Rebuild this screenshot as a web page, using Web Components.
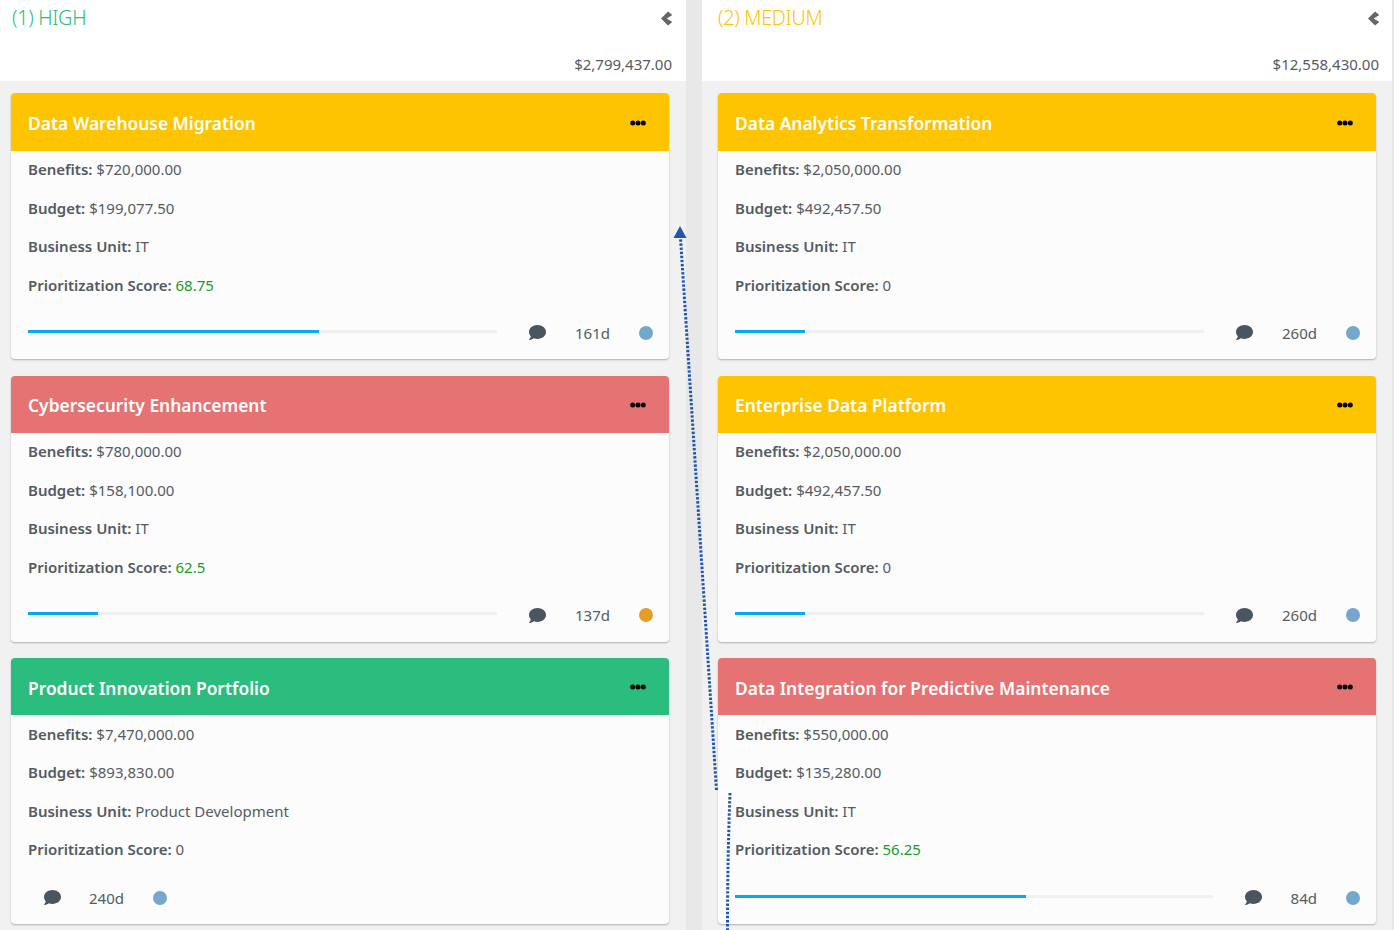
<!DOCTYPE html>
<html lang="en"><head><meta charset="utf-8"><title>Board</title>
<style>
html,body{margin:0;height:100%;overflow:hidden;background:#e8e8e8;font-family:"Noto Sans","Open Sans",sans-serif;color:#495057}
</style></head><body>
<x-board>
<x-column heading="(1) HIGH" total="$2,799,437.00" color="#2bbd7e" style="--pad-l:11px;--pad-r:17px;--w:686px;--hl:12px;--hr:14px">
  <x-card title-text="Data Warehouse Migration" color="#ffc400" bar="291" days="161d" dot="#74a7cb">
    <x-field label="Benefits">$720,000.00</x-field><x-field label="Budget">$199,077.50</x-field><x-field label="Business Unit">IT</x-field><x-field label="Prioritization Score" good>68.75</x-field>
  </x-card>
  <x-card title-text="Cybersecurity Enhancement" color="#e57373" bar="70" days="137d" dot="#e79c26">
    <x-field label="Benefits">$780,000.00</x-field><x-field label="Budget">$158,100.00</x-field><x-field label="Business Unit">IT</x-field><x-field label="Prioritization Score" good>62.5</x-field>
  </x-card>
  <x-card title-text="Product Innovation Portfolio" color="#2bbd7e" days="240d" dot="#74a7cb">
    <x-field label="Benefits">$7,470,000.00</x-field><x-field label="Budget">$893,830.00</x-field><x-field label="Business Unit">Product Development</x-field><x-field label="Prioritization Score">0</x-field>
  </x-card>
</x-column>
<x-column heading="(2) MEDIUM" total="$12,558,430.00" color="#ffc400" style="--pad-l:16px;--pad-r:16px;--w:690px;margin-left:16px;--hl:16px;--hr:13px">
  <x-card title-text="Data Analytics Transformation" color="#ffc400" bar="70" days="260d" dot="#74a7cb">
    <x-field label="Benefits">$2,050,000.00</x-field><x-field label="Budget">$492,457.50</x-field><x-field label="Business Unit">IT</x-field><x-field label="Prioritization Score">0</x-field>
  </x-card>
  <x-card title-text="Enterprise Data Platform" color="#ffc400" bar="70" days="260d" dot="#74a7cb">
    <x-field label="Benefits">$2,050,000.00</x-field><x-field label="Budget">$492,457.50</x-field><x-field label="Business Unit">IT</x-field><x-field label="Prioritization Score">0</x-field>
  </x-card>
  <x-card title-text="Data Integration for Predictive Maintenance" color="#e57373" bar="291" days="84d" dot="#74a7cb">
    <x-field label="Benefits">$550,000.00</x-field><x-field label="Budget">$135,280.00</x-field><x-field label="Business Unit">IT</x-field><x-field label="Prioritization Score" good>56.25</x-field>
  </x-card>
</x-column>
</x-board>
<script>
function tpl(html){const t=document.createElement('template');t.innerHTML=html;return t}

const boardT=tpl(`<style>
:host{display:flex;align-items:flex-start;position:relative;width:1394px;height:930px;overflow:hidden}
svg{position:absolute;left:0;top:0;pointer-events:none}
</style><slot></slot>
<svg width="1394" height="930" viewBox="0 0 1394 930" aria-hidden="true">
<g fill="none" stroke="#2257a8" stroke-width="3" stroke-dasharray="2.4 1.7">
<path d="M716.5 790 L680.5 238"/>
<path d="M730 793 Q727.5 860 727.5 930"/>
</g>
<path d="M680 226 L686.5 238 L673.5 238 Z" fill="#2257a8"/>
</svg>`);
customElements.define('x-board',class extends HTMLElement{
  constructor(){super();this.attachShadow({mode:'open'}).append(boardT.content.cloneNode(true))}
});

const colT=tpl(`<style>
:host{display:block;flex:none;width:var(--w);height:930px;background:#f1f1f1}
header{background:#fff;height:81px;display:flex;flex-direction:column;box-sizing:border-box;padding:6px var(--hr) 0 var(--hl)}
.top{display:flex;justify-content:space-between;align-items:center;height:26px}
h2{margin:-4px 0 0;font-weight:300;font-size:19.8px;letter-spacing:-.3px;line-height:25px;color:var(--c);font-family:"Noto Sans",sans-serif}
svg{width:11.5px;height:15px;margin-top:-1px;fill:#666;display:block}
.total{margin-top:auto;margin-bottom:7px;text-align:right;font-size:15px;line-height:20px;color:#555b62}
.cards{display:flex;flex-direction:column;gap:16.5px;padding:12.3px var(--pad-r) 0 var(--pad-l)}
</style>
<header><div class="top"><h2></h2><svg viewBox="0 0 11.5 15"><path d="M0 7.5 L7 .4 L11.4 4.1 L5.7 7.5 L11.4 10.9 L7 14.6 Z"/></svg></div><div class="total"></div></header>
<div class="cards"><slot></slot></div>`);
customElements.define('x-column',class extends HTMLElement{
  constructor(){super();this.attachShadow({mode:'open'}).append(colT.content.cloneNode(true))}
  connectedCallback(){const r=this.shadowRoot;r.querySelector('h2').textContent=this.getAttribute('heading');r.querySelector('.total').textContent=this.getAttribute('total');this.style.setProperty('--c',this.getAttribute('color'))}
});

const cardT=tpl(`<style>
:host{display:block;background:#fcfcfc;border-radius:4px;box-shadow:0 1px 2px rgba(0,0,0,.28);height:265.9px;overflow:hidden}
.head{display:flex;align-items:center;justify-content:space-between;height:57.3px;padding:0 17px;background:var(--c)}
h3{margin:2px 0 0;font-size:17.4px;font-weight:600;color:#fff;font-family:"Noto Sans",sans-serif}
.more{width:16px;height:6px;margin:1.5px 6.5px 0 0;display:block}
.body{padding:0 17px}
.foot{display:flex;align-items:center;height:20px;margin-top:18.3px;padding:0 16px 0 17px}
.track{flex:1;height:3px;background:#f0f0f0;position:relative;margin-top:-3px}
.fill{position:absolute;left:0;top:0;height:100%;background:#03a9f4}
.cm{width:17px;height:17px;fill:#495560;margin:0 29px 0 32px;flex:none}
.days{font-size:15px;line-height:20px;color:#555b62;flex:none}
.dot{width:14px;height:14px;border-radius:50%;margin-left:29px;flex:none}
</style>
<div class="head"><h3></h3><svg class="more" viewBox="0 0 16 6"><circle cx="2.7" cy="3" r="2.5"/><circle cx="8" cy="3" r="2.5"/><circle cx="13.3" cy="3" r="2.5"/></svg></div>
<div class="body"><slot></slot></div>
<div class="foot"><div class="track"><div class="fill"></div></div><svg class="cm" viewBox="0 0 512 512"><path d="M256 32C114.6 32 0 125.1 0 240c0 49.6 21.4 95 57 130.7C44.5 421.1 2.7 466 2.2 466.5c-2.2 2.3-2.8 5.7-1.5 8.7S4.8 480 8 480c66.3 0 116-31.8 140.6-51.4 32.7 12.3 69 19.4 107.4 19.4 141.4 0 256-93.1 256-208S397.4 32 256 32z"/></svg><span class="days"></span><span class="dot"></span></div>`);
customElements.define('x-card',class extends HTMLElement{
  constructor(){super();this.attachShadow({mode:'open'}).append(cardT.content.cloneNode(true))}
  connectedCallback(){const r=this.shadowRoot;
    this.style.setProperty('--c',this.getAttribute('color'));
    r.querySelector('h3').textContent=this.getAttribute('title-text');
    r.querySelector('.days').textContent=this.getAttribute('days');
    r.querySelector('.dot').style.background=this.getAttribute('dot');
    const b=this.getAttribute('bar'),tr=r.querySelector('.track');
    if(b){r.querySelector('.fill').style.width=b+'px'}else{tr.style.cssText='flex:none;width:0;';r.querySelector('.cm').style.marginLeft='16px';
      r.querySelector('.cm').style.marginRight='28px';r.querySelector('.dot').style.marginRight='auto'}
  }
});

const fieldT=tpl(`<style>
:host{display:block;height:38.5px;padding-top:8.5px;box-sizing:border-box;font-size:15px;line-height:20px;color:#555b62;white-space:nowrap}
b{font-weight:600;color:#525a62}
:host([good]) slot{color:#1a9a2e}
</style><b></b> <slot></slot>`);
customElements.define('x-field',class extends HTMLElement{
  constructor(){super();this.attachShadow({mode:'open'}).append(fieldT.content.cloneNode(true))}
  connectedCallback(){this.shadowRoot.querySelector('b').textContent=this.getAttribute('label')+':'}
});
</script>
</body></html>
